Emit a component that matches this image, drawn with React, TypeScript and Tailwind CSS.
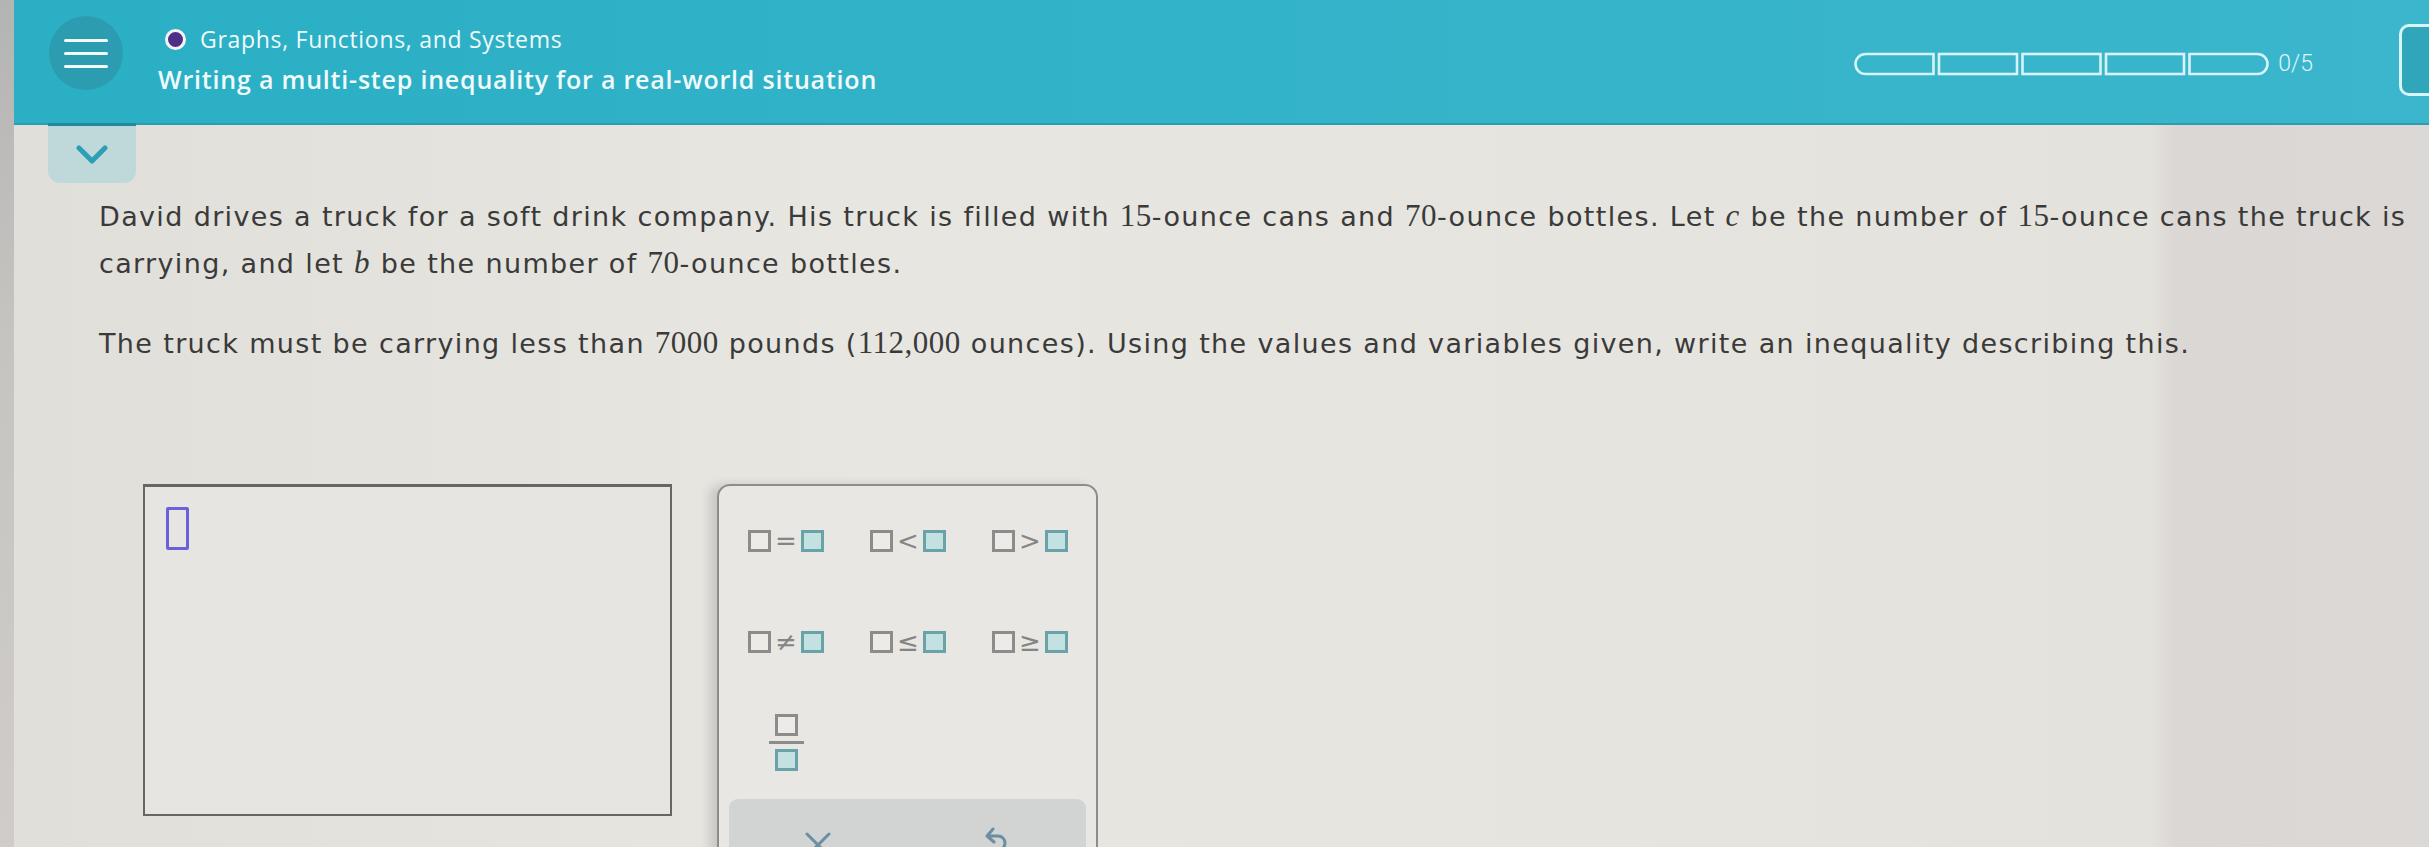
import React from "react";

function Num({ children }: { children: React.ReactNode }) {
  return <span className="font-['Liberation_Serif',serif] text-[31px] tracking-[0.5px]">{children}</span>;
}
function V({ children }: { children: React.ReactNode }) {
  return <span className="font-['Liberation_Serif',serif] italic text-[31px]">{children}</span>;
}

function GrayBox() {
  return <span className="inline-block w-[23px] h-[22px] border-[3px] border-[#8c8c8a] bg-[#ecebe7]" />;
}
function CyanBox() {
  return <span className="inline-block w-[23px] h-[22px] border-[3px] border-[#6aa3a7] bg-[#c3e1e1]" />;
}

function OpKey({ op }: { op: string }) {
  return (
    <div className="flex items-center justify-center">
      <div className="flex items-center">
        <GrayBox />
        <span className="font-['DejaVu_Sans',sans-serif] text-[26px] leading-none text-[#858583] w-[30px] text-center">{op}</span>
        <CyanBox />
      </div>
    </div>
  );
}

function Progress() {
  const segs = [0, 1, 2, 3, 4];
  return (
    <svg width="420" height="24" viewBox="0 0 420 24" fill="none">
      {segs.map((i) => {
        const x = 1.5 + i * 83.5;
        const w = 78;
        if (i === 0)
          return (
            <path key={i} d={`M ${x + 10} 2 H ${x + w} V 22 H ${x + 10} A 10 10 0 0 1 ${x + 10} 2 Z`} stroke="#d6f3f7" strokeWidth="2.6" />
          );
        if (i === 4)
          return (
            <path key={i} d={`M ${x} 2 H ${x + w - 10} A 10 10 0 0 1 ${x + w - 10} 22 H ${x} Z`} stroke="#d6f3f7" strokeWidth="2.6" />
          );
        return <rect key={i} x={x} y={2} width={w} height={20} stroke="#d6f3f7" strokeWidth="2.6" />;
      })}
    </svg>
  );
}

export default function App() {
  return (
    <div className="w-[2429px] h-[847px] overflow-hidden flex bg-[#b9b8b6]">
      <div className="w-[14px] shrink-0 bg-[linear-gradient(to_bottom,#b4b4b3,#c6c4c1_40%,#cfccc9)]" />
      <div className="flex-1 flex flex-col bg-[linear-gradient(to_right,#e1dfda_0%,#e7e6e1_35%,#e6e4df_70%,#e4e2dd_88.5%,#dbd7d4_89.5%,#dcd8d5_100%)]">
        {/* Header */}
        <div className="h-[125px] shrink-0 flex items-center bg-[linear-gradient(to_right,#2aafc5,#33b3c9_50%,#3bb6cc)] border-b-[2px] border-[#2a9db2]">
          <div className="ml-[35px] w-[74px] h-[74px] rounded-full bg-[#2c9db1] flex flex-col items-center justify-center gap-[10px] -mt-[17px]">
            <span className="block w-[44px] h-[3px] rounded-full bg-[#f2fbfc]" />
            <span className="block w-[44px] h-[3px] rounded-full bg-[#f2fbfc]" />
            <span className="block w-[44px] h-[3px] rounded-full bg-[#f2fbfc]" />
          </div>
          <div className="ml-[35px] flex flex-col -mt-[9px] font-['Open_Sans',sans-serif] text-[#f1fafb]">
            <div className="flex items-center h-[34px]">
              <span className="ml-[7px] w-[21px] h-[21px] rounded-full bg-[#4f2f86] border-[3px] border-[#f4f4f8]" />
              <span className="ml-[14px] text-[23px] leading-none tracking-[0.7px]">Graphs, Functions, and Systems</span>
            </div>
            <div className="mt-[11px] text-[25px] font-semibold leading-none tracking-[0.8px]">Writing a multi-step inequality for a real-world situation</div>
          </div>
          <div className="ml-auto flex items-center mt-[5px]">
            <Progress />
            <span className="ml-[4px] font-['Roboto',sans-serif] text-[23px] text-[#dff5f8] font-light">0/5</span>
          </div>
          <div className="ml-[86px] -mr-[20px] w-[50px] h-[72px] rounded-[10px] border-[3px] border-[#d9f4f8] bg-[#2fa6ba] -mt-[3px]" />
        </div>

        {/* Body */}
        <div className="flex flex-col">
          <div className="ml-[34px] -mt-[2px] w-[88px] h-[60px] rounded-b-[12px] bg-[#bfd8da] border-t-[3px] border-[#25889c] flex items-center justify-center">
            <svg width="32" height="20" viewBox="0 0 32 20" fill="none">
              <path d="M3 3 L16 16 L29 3" stroke="#2b9fb6" strokeWidth="5" strokeLinecap="round" strokeLinejoin="round" />
            </svg>
          </div>

          <div className="ml-[85px] mt-[10px] font-['DejaVu_Sans',sans-serif] text-[27px] leading-[46px] tracking-[1.35px] text-[#3a3a3a] whitespace-nowrap">
            <p>
              David drives a truck for a soft drink company. His truck is filled with <Num>15</Num>-ounce cans and <Num>70</Num>-ounce bottles. Let <V>c</V> be the number of <Num>15</Num>-ounce cans the truck is
            </p>
            <p>
              carrying, and let <V>b</V> be the number of <Num>70</Num>-ounce bottles.
            </p>
            <p className="mt-[33px]">
              The truck must be carrying less than <Num>7000</Num> pounds (<Num>112,000</Num> ounces). Using the values and variables given, write an inequality describing this.
            </p>
          </div>

          <div className="mt-[117px] flex items-start">
            <div className="ml-[129px] w-[529px] h-[332px] border-[2px] border-[#666664] border-t-[3px] bg-[#e6e5e1]">
              <div className="ml-[21px] mt-[20px] w-[23px] h-[43px] border-[3px] border-[#6d5fdc] rounded-[2px]" />
            </div>
            <div className="ml-[45px] w-[381px] h-[380px] rounded-t-[13px] border-[2px] border-[#8d8d8b] bg-[#e8e7e3] shadow-[-8px_0_10px_rgba(0,0,0,0.12)] flex flex-col">
              <div className="pl-[6px] pt-[4px] grid grid-cols-[122px_122px_122px]">
                <div className="h-[101px] flex items-center justify-center"><OpKey op="=" /></div>
                <div className="h-[101px] flex items-center justify-center"><OpKey op="<" /></div>
                <div className="h-[101px] flex items-center justify-center"><OpKey op=">" /></div>
                <div className="h-[101px] flex items-center justify-center"><OpKey op="≠" /></div>
                <div className="h-[101px] flex items-center justify-center"><OpKey op="≤" /></div>
                <div className="h-[101px] flex items-center justify-center"><OpKey op="≥" /></div>
                <div className="h-[101px] flex items-center justify-center">
                  <div className="flex flex-col items-center">
                    <GrayBox />
                    <span className="block w-[35px] h-[3px] bg-[#8c8c8a] my-[5px]" />
                    <CyanBox />
                  </div>
                </div>
              </div>
              <div className="mx-[10px] mt-[6px] h-[80px] rounded-t-[9px] bg-[#d2d4d3] flex">
                <div className="w-[178px] flex justify-center pt-[32px]">
                  <svg width="28" height="28" viewBox="0 0 28 28" fill="none">
                    <path d="M3 3 L25 25 M25 3 L3 25" stroke="#6b8ea2" strokeWidth="3" strokeLinecap="round" />
                  </svg>
                </div>
                <div className="w-[178px] flex justify-center pt-[27px]">
                  <svg width="26" height="30" viewBox="0 0 26 30" fill="none">
                    <path d="M10 3 L4 10 L11 16 M4 10 H15 A7 7 0 0 1 15 24 H10" stroke="#6b8ea2" strokeWidth="3" strokeLinecap="round" strokeLinejoin="round" />
                  </svg>
                </div>
              </div>
            </div>
          </div>
        </div>
      </div>
    </div>
  );
}
